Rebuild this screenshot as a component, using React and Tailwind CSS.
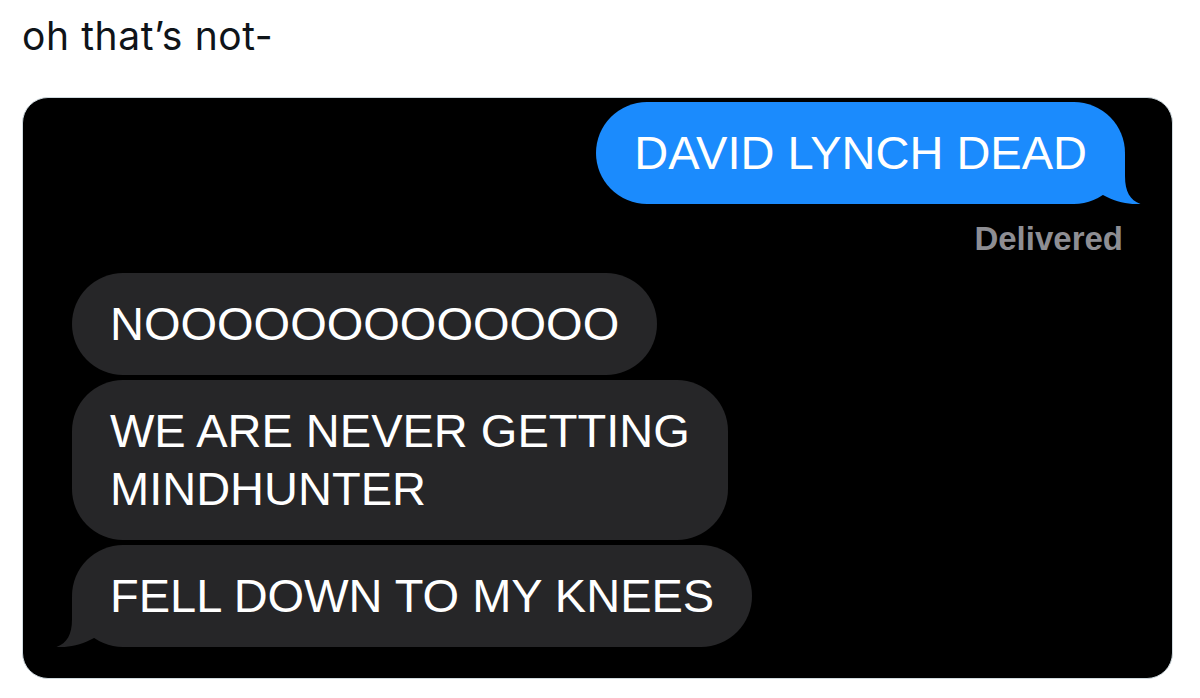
import React from 'react';

const Tail = ({ color, className }) => (
  <svg width="46" height="50" viewBox="0 0 46 50" className={className}>
    <path d="M30 0 L30 22 C30 38 35 46 45.5 50 C36 51 20 48 8 41 L0 41 L0 0 Z" fill={color} />
  </svg>
);

function Bubble({ children, mine, tail }) {
  return (
    <div
      className={`relative w-fit rounded-[51px] px-[38px] py-[22px] text-[47px] leading-[58px] ${
        mine ? 'bg-[#1b8bfd] text-white' : 'bg-[#262628] text-white'
      }`}
    >
      <span className="relative z-10">{children}</span>
      {tail && mine && <Tail color="#1b8bfd" className="absolute bottom-0 right-[-16px]" />}
      {tail && !mine && <Tail color="#262628" className="absolute bottom-0 left-[-16px] -scale-x-100" />}
    </div>
  );
}

export default function App() {
  const received = [
    { id: 1, text: 'NOOOOOOOOOOOOO' },
    { id: 2, text: <>WE ARE NEVER GETTING<br />MINDHUNTER</> },
    { id: 3, text: 'FELL DOWN TO MY KNEES', tail: true },
  ];

  return (
    <div className="min-h-screen bg-white">
      <div className="pl-[22px] pt-[12px] font-['Inter'] text-[39px] leading-[48px] tracking-[0.6px] text-[#0f1419]">
        oh that’s not-
      </div>

      <div className="ml-[22px] mt-[37px] w-[1151px] rounded-[26px] border border-[#cfd9de] bg-black pt-[4px] pb-[31px] font-['Liberation_Sans',Arial,sans-serif]">
        <div className="flex flex-col items-end pr-[47px]">
          <Bubble mine tail>DAVID LYNCH DEAD</Bubble>
          <div className="mt-[17px] pr-[2px] text-[33px] font-bold leading-[36px] text-[#8e8e93]">Delivered</div>
        </div>

        <div className="mt-[16px] flex flex-col items-start gap-[5px] pl-[49px]">
          {received.map(m => (
            <Bubble key={m.id} tail={m.tail}>{m.text}</Bubble>
          ))}
        </div>
      </div>
    </div>
  );
}
